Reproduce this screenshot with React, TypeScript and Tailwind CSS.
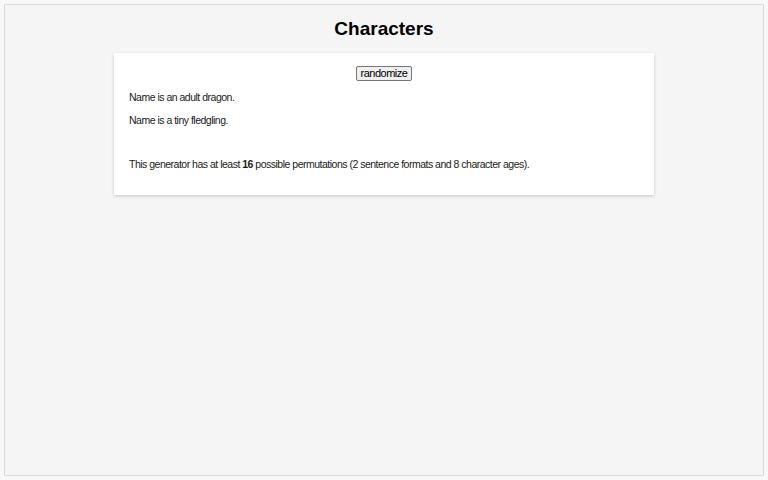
export default function App() {
  return (
    <div className="h-[480px] bg-[#f8f8f8] p-1 font-['Liberation_Sans',Arial,sans-serif]">
      <div className="h-[472px] border border-[#dcdcdc] bg-[#f5f5f5]">
        <h1 className="pt-[12px] text-center text-[19px] font-bold leading-[24px] text-black">
          Characters
        </h1>
        <div className="mx-auto mt-[12px] w-[540px] bg-white px-[15px] pb-[24px] pt-[13px] text-[10.5px] tracking-[-0.5px] text-[#1a1a1a] shadow-[0_1px_3px_rgba(0,0,0,0.2)]">
          <div className="text-center">
            <button className="rounded-[2px] border border-[#767676] bg-[#efefef] px-[4px] text-[11px] leading-[13px] tracking-[-0.5px] text-black">
              randomize
            </button>
          </div>
          <p className="mt-[8px] leading-[14px]">Name is an adult dragon.</p>
          <p className="mt-[9px] leading-[14px]">Name is a tiny fledgling.</p>
          <p className="mt-[30px] leading-[14px]">
            This generator has at least <b>16</b> possible permutations (2 sentence formats and 8 character ages).
          </p>
        </div>
      </div>
    </div>
  );
}
